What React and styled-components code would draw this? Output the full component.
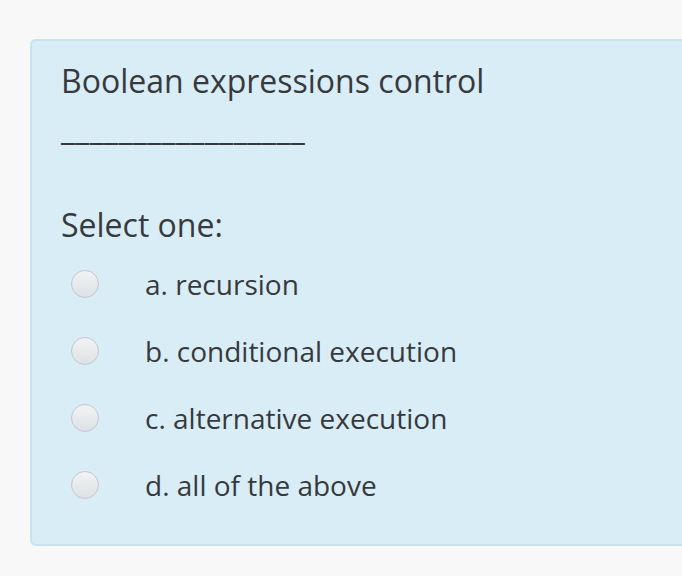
import React from "react";
import styled, { createGlobalStyle } from "styled-components";

const GlobalStyle = createGlobalStyle`
  html, body {
    margin: 0;
    padding: 0;
    background: #f8f8f8;
    font-family: "Open Sans", "Noto Sans", sans-serif;
    color: #373a3c;
  }
`;

const Page = styled.div`
  padding: 39px 0 0 30px;
  height: 576px;
  box-sizing: border-box;
  overflow: hidden;
`;

const Card = styled.div`
  width: 680px;
  height: 507px;
  box-sizing: border-box;
  background: #d9edf7;
  border: 2px solid #c3e5ef;
  border-radius: 6px;
  padding: 16px 0 0 29px;
`;

const Title = styled.div`
  font-size: 32px;
  line-height: 48px;
`;

const Blank = styled.div`
  font-size: 32px;
  line-height: 48px;
  margin-top: -1px;
  letter-spacing: 0.35px;
`;

const Prompt = styled.div`
  font-size: 32px;
  line-height: 48px;
  margin-top: 49px;
`;

const Options = styled.div`
  display: flex;
  flex-direction: column;
  gap: 19px;
  margin-top: 11px;
`;

const Option = styled.label`
  display: flex;
  align-items: center;
  height: 48px;
  font-size: 28px;
`;

const Radio = styled.span`
  width: 26px;
  height: 26px;
  margin-left: 10px;
  border-radius: 50%;
  border: 1.5px solid #c4c8cc;
  background: linear-gradient(#f2f3f4, #dde1e5);
  flex-shrink: 0;
`;

const Text = styled.span`
  margin-left: 46px;
`;

const answers = [
  "a. recursion",
  "b. conditional execution",
  "c. alternative execution",
  "d. all of the above",
];

export default function App() {
  return (
    <Page>
      <GlobalStyle />
      <Card>
        <Title>Boolean expressions control</Title>
        <Blank>_________________</Blank>
        <Prompt>Select one:</Prompt>
        <Options>
          {answers.map((a) => (
            <Option key={a}>
              <Radio />
              <Text>{a}</Text>
            </Option>
          ))}
        </Options>
      </Card>
    </Page>
  );
}
